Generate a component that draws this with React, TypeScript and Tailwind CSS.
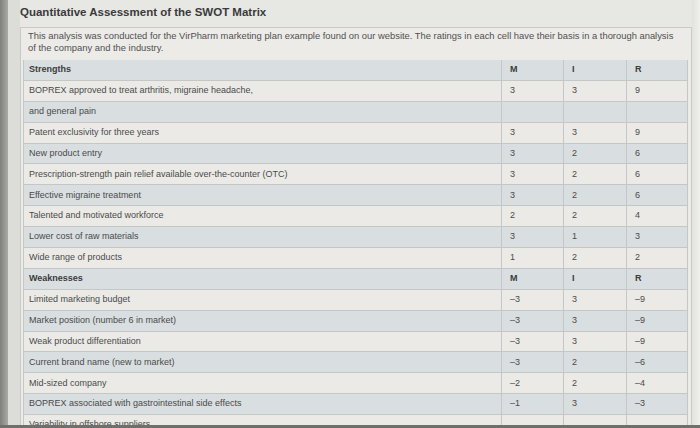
type Row = { label: string; m?: string; i?: string; r?: string; head?: boolean };

const rows: Row[] = [
  { label: 'Strengths', m: 'M', i: 'I', r: 'R', head: true },
  { label: 'BOPREX approved to treat arthritis, migraine headache,', m: '3', i: '3', r: '9' },
  { label: 'and general pain' },
  { label: 'Patent exclusivity for three years', m: '3', i: '3', r: '9' },
  { label: 'New product entry', m: '3', i: '2', r: '6' },
  { label: 'Prescription-strength pain relief available over-the-counter (OTC)', m: '3', i: '2', r: '6' },
  { label: 'Effective migraine treatment', m: '3', i: '2', r: '6' },
  { label: 'Talented and motivated workforce', m: '2', i: '2', r: '4' },
  { label: 'Lower cost of raw materials', m: '3', i: '1', r: '3' },
  { label: 'Wide range of products', m: '1', i: '2', r: '2' },
  { label: 'Weaknesses', m: 'M', i: 'I', r: 'R', head: true },
  { label: 'Limited marketing budget', m: '–3', i: '3', r: '–9' },
  { label: 'Market position (number 6 in market)', m: '–3', i: '3', r: '–9' },
  { label: 'Weak product differentiation', m: '–3', i: '3', r: '–9' },
  { label: 'Current brand name (new to market)', m: '–3', i: '2', r: '–6' },
  { label: 'Mid-sized company', m: '–2', i: '2', r: '–4' },
  { label: 'BOPREX associated with gastrointestinal side effects', m: '–1', i: '3', r: '–3' },
  { label: 'Variability in offshore suppliers' },
];

export default function App() {
  return (
    <div
      className="relative flex h-[428px] w-[700px] overflow-hidden bg-[#e7e7e4] text-[#4a4a4a]"
      style={{ fontFamily: '"Liberation Sans", Arial, sans-serif' }}
    >
      {/* left edge of the photographed screen */}
      <div className="w-[8px] shrink-0 bg-gradient-to-r from-[#7f7f7c] to-[#a9a9a5]" />
      <div className="w-[12px] shrink-0 bg-[#dcdcd9]" />

      <div className="flex w-[672px] shrink-0 flex-col">
        <h1 className="h-[27px] shrink-0 pt-[5px] text-[11.5px] font-bold leading-[14px] text-[#3a3a3a]">
          Quantitative Assessment of the SWOT Matrix
        </h1>

        <div className="flex flex-1 flex-col border-l border-r border-t border-[#c9cac7] bg-[#ecebe8] pl-[2px] pr-[3px]">
          <p className="h-[32px] shrink-0 pl-[5px] pt-[2px] text-[9.4px] leading-[12px] text-[#505050]">
            This analysis was conducted for the VirPharm marketing plan example found on our website. The ratings in each cell have their basis in a thorough analysis
            <br />
            of the company and the industry.
          </p>

          <div className="flex shrink-0 flex-col border-l border-[#c4c7c6]">
            {rows.map((row, idx) => {
              const dark = idx % 2 === 0;
              const bg = dark ? 'bg-[#d9dee0]' : 'bg-[#ebeae7]';
              const weight = row.head ? 'font-bold text-[#3c3c3c]' : '';
              return (
                <div
                  key={idx}
                  className={`flex h-[20.9px] shrink-0 items-center border-b border-[#c4c7c6] text-[9px] ${bg}`}
                >
                  <div className={`flex h-full w-[477px] shrink-0 items-center pl-[5px] ${weight}`}>{row.label}</div>
                  <div className={`flex h-full w-[62px] shrink-0 items-center border-l border-[#c4c7c6] pl-[8px] ${weight}`}>{row.m}</div>
                  <div className={`flex h-full w-[63px] shrink-0 items-center border-l border-[#c4c7c6] pl-[8px] ${weight}`}>{row.i}</div>
                  <div className={`flex h-full w-[62px] shrink-0 items-center border-l border-r border-[#c4c7c6] pl-[8px] ${weight}`}>{row.r}</div>
                </div>
              );
            })}
          </div>
        </div>
      </div>

      {/* right edge */}
      <div className="flex-1 bg-gradient-to-r from-[#e2e2df] to-[#efefec]" />

      {/* bottom bezel */}
      <div className="absolute bottom-0 left-0 h-[3px] w-full bg-[#6f6f6c]" />
    </div>
  );
}
